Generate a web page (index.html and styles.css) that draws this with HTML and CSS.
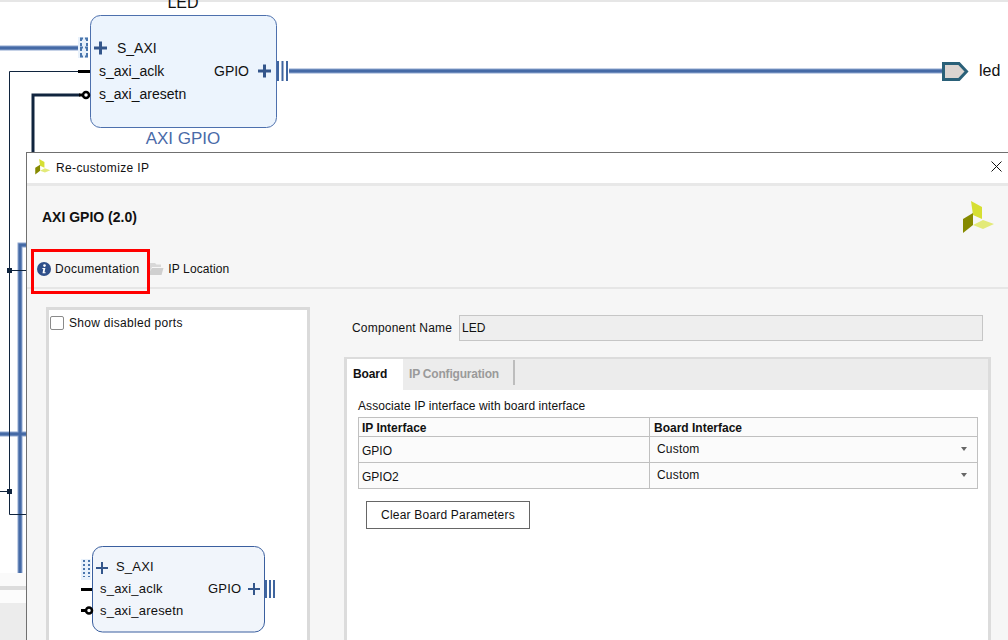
FILE: index.html
```html
<!DOCTYPE html>
<html lang="en">
<head>
<meta charset="utf-8">
<title>Re-customize IP</title>
<link rel="stylesheet" href="styles.css">
</head>
<body>
<main class="canvas">
  <svg class="diagram" width="1008" height="640" viewBox="0 0 1008 640">
    <rect class="topstrip" x="0" y="0" width="1008" height="2"/>
    <text class="d-title" x="183" y="8" text-anchor="middle">LED</text>
    <path class="bus-glow" d="M0 48H80M289 71H944M20 573V245H27M0 434H27"/>
    <path class="bus" d="M0 48H80M289 71H944M20 573V245H27M0 434H27"/>
    <path class="wire" d="M79 71.500H9.500V514.500H27M9 270.500H27M0 491.500H9"/>
    <rect class="node" x="7" y="268" width="5" height="5"/>
    <rect class="node" x="7" y="489" width="5" height="5"/>
    <path class="wire-thick" d="M80 95H33V152"/>
    <rect class="conn-bg" x="78" y="37" width="10" height="21"/>
    <path class="conn-dots" d="M80 38.500H88M80 47.500H83M85 47.500H88M80 56.500H88M81 38V58M87 38V58"/>
    <rect class="block" x="90.500" y="15.500" width="186" height="112" rx="10"/>
    <path class="plus" d="M94 48H107M100.500 41.500V54.500M258 71H271M264.500 64.500V77.500"/>
    <path class="pin" d="M78 71.500H90"/>
    <path class="pin" d="M79 95H82"/>
    <circle class="bubble" cx="86" cy="95" r="3"/>
    <path class="bars" d="M278 61V81M282.500 61V81M287 61V81"/>
    <text class="d-label" x="117" y="53">S_AXI</text>
    <text class="d-label" x="99" y="76">s_axi_aclk</text>
    <text class="d-label" x="99" y="99">s_axi_aresetn</text>
    <text class="d-label" x="214" y="76">GPIO</text>
    <text class="d-name" x="183" y="144" text-anchor="middle">AXI GPIO</text>
    <polygon class="port" points="943.500,63.500 959,63.500 966.500,71.500 959,79.500 943.500,79.500"/>
    <text class="d-port" x="979" y="76">led</text>
    <rect class="band-a" x="0" y="573" width="26" height="13"/>
    <rect class="band-b" x="0" y="586" width="26" height="4"/>
    <rect class="band-c" x="0" y="590" width="26" height="13"/>
    <rect class="band-d" x="0" y="603" width="26" height="37"/>
  </svg>

  <section class="dialog">
    <header class="titlebar">
      <svg class="logo-small" width="16" height="16" viewBox="963 201 32 33">
        <polygon class="logo-top" points="971,201 982,207 982,219 973,215"/>
        <polygon class="logo-right" points="973,225 983,220 994,224 983,229"/>
        <polygon class="logo-left" points="963,219 973,213 973,225 963,233"/>
      </svg>
      <span class="titlebar-text">Re-customize IP</span>
      <svg class="close" width="11" height="11" viewBox="0 0 11 11"><path d="M.5 .5L10.500 10.500M10.500 .5L.5 10.500"/></svg>
    </header>

    <div class="heading-row">
      <h1 class="heading">AXI GPIO (2.0)</h1>
      <svg class="logo" width="32" height="33" viewBox="963 201 32 33">
        <polygon class="logo-top" points="971,201 982,207 982,219 973,215"/>
        <polygon class="logo-right" points="973,225 983,220 994,224 983,229"/>
        <polygon class="logo-left" points="963,219 973,213 973,225 963,233"/>
      </svg>
    </div>

    <nav class="toolbar">
      <span class="tool tool-doc">
        <svg width="14" height="14" viewBox="0 0 14 14">
          <circle class="info-bg" cx="7" cy="7" r="7"/>
          <circle class="info-fg" cx="7.500" cy="3.600" r="1.300"/>
          <path class="info-fg" d="M5.500 6H8.400L7.500 10.300H8.700L8.500 11.200H5.500L6.300 6.900H5.300Z"/>
        </svg>
        Documentation
      </span>
      <span class="tool tool-loc">
        <svg width="15" height="14" viewBox="0 0 15 14">
          <path class="folder-back" d="M1 1H6L7.500 2.500H12V5H3L1 9Z"/>
          <path class="folder-front" d="M3 6H14.500L12.500 13H1V9Z"/>
        </svg>
        IP Location
      </span>
    </nav>
    <div class="highlight"></div>

    <div class="content">
      <aside class="preview">
        <label class="check-row"><span class="checkbox"></span>Show disabled ports</label>
        <svg class="symbol" width="258" height="120" viewBox="49 532 258 120">
          <rect class="conn-bg" x="81" y="559" width="10" height="21"/>
          <path class="conn-dots-sm" d="M84 560V577M89 560V577"/>
          <rect class="block-sm" x="92.500" y="546.500" width="172" height="85.500" rx="10"/>
          <path class="plus-sm" d="M96 568H108M102 562V574M248 589H260M254 583V595"/>
          <path class="pin" d="M81 589.500H92"/>
          <path class="pin" d="M81 610.500H86"/>
          <circle class="bubble" cx="89" cy="610.500" r="3"/>
          <path class="bars" d="M266 580V598M270 580V598M274 580V598"/>
          <text class="s-label" x="116" y="571">S_AXI</text>
          <text class="s-label" x="100" y="593">s_axi_aclk</text>
          <text class="s-label" x="100" y="615">s_axi_aresetn</text>
          <text class="s-label" x="208" y="593">GPIO</text>
        </svg>
      </aside>

      <div class="settings">
        <div class="name-row">
          <span class="name-label">Component Name</span>
          <span class="name-input">LED</span>
        </div>
        <div class="tabs">
          <div class="tab-strip">
            <span class="tab tab-active">Board</span>
            <span class="tab tab-idle">IP Configuration</span>
          </div>
          <div class="tab-body">
            <p class="assoc">Associate IP interface with board interface</p>
            <table class="board-table">
              <colgroup><col class="col-a"><col></colgroup>
              <thead>
                <tr><th>IP Interface</th><th>Board Interface</th></tr>
              </thead>
              <tbody>
                <tr><td>GPIO</td><td><div class="combo"><span>Custom</span><i class="arrow"></i></div></td></tr>
                <tr><td>GPIO2</td><td><div class="combo"><span>Custom</span><i class="arrow"></i></div></td></tr>
              </tbody>
            </table>
            <button class="clear-btn" type="button">Clear Board Parameters</button>
          </div>
        </div>
      </div>
    </div>
  </section>
</main>
</body>
</html>
```
FILE: styles.css
```css
* { box-sizing: border-box; }
html, body { margin: 0; padding: 0; background: #fff; }
body { font: 12px "Liberation Sans", Arial, sans-serif; color: #111; }

.canvas { position: relative; width: 1008px; height: 640px; overflow: hidden; background: #fff; }
.diagram { position: absolute; left: 0; top: 0; display: block; }

.topstrip { fill: #e6e6e6; }
.d-title { font: 16px "Liberation Sans", sans-serif; fill: #111; }
.d-label { font: 14px "Liberation Sans", sans-serif; fill: #111; }
.d-name { font: 17px "Liberation Sans", sans-serif; fill: #4a6aa8; }
.d-port { font: 16px "Liberation Sans", sans-serif; fill: #111; }
.bus-glow { fill: none; stroke: #8ea6cf; stroke-width: 5; }
.bus { fill: none; stroke: #456aa6; stroke-width: 3; }
.wire { fill: none; stroke: #10243e; stroke-width: 1; }
.wire-thick { fill: none; stroke: #10243e; stroke-width: 3; }
.node { fill: #10243e; }
.conn-bg { fill: #e8f1fb; }
.conn-dots { fill: none; stroke: #4a76ad; stroke-width: 2; stroke-dasharray: 3 2; }
.conn-dots-sm { fill: none; stroke: #4a76ad; stroke-width: 2; stroke-dasharray: 2 2; }
.block { fill: #ecf4fd; stroke: #4d70ad; stroke-width: 1; }
.block-sm { fill: #f1f5fb; stroke: #3a5f9f; stroke-width: 1; }
.plus { fill: none; stroke: #34568b; stroke-width: 3; }
.plus-sm { fill: none; stroke: #34568b; stroke-width: 2; }
.pin { fill: none; stroke: #000; stroke-width: 3; }
.bubble { fill: #fff; stroke: #000; stroke-width: 2.500; }
.bars { fill: none; stroke: #3f659f; stroke-width: 2; }
.port { fill: #dbd4d0; stroke: #2a6078; stroke-width: 3; }
.band-a { fill: #fafafa; }
.band-b { fill: #dcdcdc; }
.band-c { fill: #fcfcfc; }
.band-d { fill: #ececec; }

.dialog {
  position: absolute; left: 26px; top: 152px; width: 982px; height: 488px;
  border-top: 1px solid #707070; border-left: 1px solid #707070;
  background: #f6f6f6; overflow: hidden;
}
.titlebar {
  height: 33px; display: flex; align-items: center; padding: 0 6px 3px 8px;
  background: #fff; border-bottom: 3px solid #e8e8e8;
}
.logo-small { margin-right: 5px; }
.titlebar-text { flex: 1; padding-top: 2px; letter-spacing: .35px; }
.close path { fill: none; stroke: #111; stroke-width: 1; }
.logo-top { fill: #d6df33; }
.logo-right { fill: #e3ea78; }
.logo-left { fill: #868a00; }
.logo-small, .logo { display: block; }

.heading-row {
  display: flex; justify-content: space-between; align-items: center;
  padding: 15px 13px 0 15px;
}
.heading { margin: 0 0 2px; font: bold 14px "Liberation Sans", sans-serif; color: #111; }

.toolbar {
  height: 41px; margin-top: 14px; display: flex; align-items: center;
  padding: 2px 0 0 10px; border-bottom: 2px solid #e6e6e6;
}
.tool { display: inline-flex; align-items: center; gap: 4px; }
.tool-doc { letter-spacing: .28px; }
.tool-loc { margin-left: 10px; letter-spacing: .1px; }
.info-bg { fill: #2f4f8a; }
.info-fg { fill: #fff; }
.folder-back { fill: #d8d8d8; }
.folder-front { fill: #cfcfcf; }

.highlight {
  position: absolute; left: 4px; top: 96px; width: 119px; height: 45px;
  border: 3px solid #f00;
}

.content { display: flex; gap: 34px; padding: 18px 0 0 19px; }

.preview {
  width: 264px; height: 360px; flex: none; background: #fff;
  border: 3px solid #dadada; border-bottom: 0;
}
.check-row { display: flex; align-items: center; gap: 5px; padding: 6px 0 0 1px; letter-spacing: .3px; }
.checkbox {
  width: 14px; height: 14px; border: 1px solid #8a8a8a; border-radius: 2px; background: #fff;
}
.symbol { display: block; margin-top: 202px; }
.s-label { font: 13px "Liberation Sans", sans-serif; fill: #111; letter-spacing: .2px; }

.settings { width: 647px; flex: none; padding-top: 8px; }
.name-row { display: flex; align-items: center; height: 26px; padding-left: 8px; }
.name-label { width: 107px; flex: none; letter-spacing: .2px; }
.name-input {
  width: 524px; height: 26px; padding-left: 2px; line-height: 24px;
  background: #eee; border: 1px solid #c6c6c6;
}
.tabs { margin-top: 16px; height: 300px; border: 3px solid #dcdcdc; border-top-width: 2px; border-bottom: 0; background: #fff; }
.tab-strip { display: flex; align-items: flex-start; height: 31px; background: #ececec; }
.tab { font-weight: bold; padding-left: 6px; }
.tab-active { width: 56px; height: 31px; line-height: 30px; background: #fff; color: #111; letter-spacing: -.1px; }
.tab-idle {
  height: 25px; margin-top: 1px; line-height: 28px; padding-right: 14px; color: #9a9a9a;
  border-right: 2px solid #bdbdbd; letter-spacing: -.2px;
}
.tab-body { padding: 8px 0 0 11px; }
.assoc { margin: 0 0 3px; line-height: 16px; letter-spacing: .08px; }

.board-table {
  width: 620px; table-layout: fixed; border-collapse: collapse; background: #fbfbfb; font-size: 12px;
}
.col-a { width: 291px; }
.board-table th, .board-table td { border: 1px solid #c0c0c0; padding: 0 0 0 4px; text-align: left; }
.board-table th:first-child, .board-table td:first-child { padding-left: 3px; }
.board-table th { height: 19px; padding-top: 2px; line-height: 16px; font-weight: bold; }
.board-table td { height: 26px; padding-top: 2px; }
.combo { display: flex; align-items: center; justify-content: space-between; padding: 0 10px 3px 3px; letter-spacing: .2px; }
.arrow { width: 0; height: 0; border: 3.500px solid transparent; border-top: 4px solid #666; border-bottom: 0; }

.clear-btn {
  display: block; margin: 12px 0 0 8px; width: 164px; height: 28px; padding: 0;
  background: #fff; border: 1px solid #666; border-radius: 0; color: #111;
  font: 12px "Liberation Sans", sans-serif; letter-spacing: .2px;
}
```
